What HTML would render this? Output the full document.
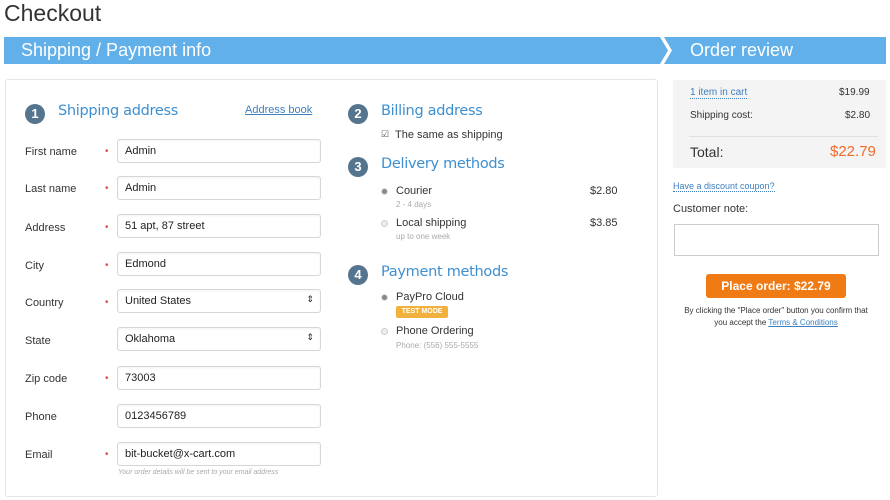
<!DOCTYPE html>
<html><head><meta charset="utf-8"><style>
*{margin:0;padding:0;box-sizing:border-box}
body{width:890px;height:500px;background:#fff;font-family:"Liberation Sans",sans-serif;position:relative;overflow:hidden;color:#333}
.a{position:absolute;white-space:nowrap}
.lbl{font-size:11px;color:#333}
.inp{position:absolute;left:117px;width:204px;height:24px;border:1px solid #d6d6d6;border-radius:3px;font-size:11px;padding:5px 7px;color:#222;box-shadow:inset 0 1px 2px rgba(0,0,0,.05)}
.star{position:absolute;left:105px;color:#e05050;font-size:10px}
.num{position:absolute;width:20px;height:20px;border-radius:50%;background:#55748e;color:#fff;font-weight:bold;font-size:13px;text-align:center;line-height:20px}
.h{position:absolute;font-size:14.5px;color:#3d8fd0;font-family:"DejaVu Sans",sans-serif;letter-spacing:-0.3px}
.rad{position:absolute;width:7px;height:7px;border-radius:50%;border:1px solid #ccc;background:#eee}
.sm{font-size:8px;color:#aaa}
</style></head><body>
<div class="a" style="left:4px;top:0;font-size:23px;color:#333">Checkout</div>
<svg class="a" style="left:0;top:0" width="890" height="70">
<polygon points="4,37 660,37 668,50.5 660,64 4,64" fill="#62b0ea"/>
<polygon points="664,37 886,37 886,64 664,64 672,50.5" fill="#62b0ea"/>
</svg>
<div class="a" style="left:21px;top:40px;font-size:18px;color:#fff">Shipping / Payment info</div>
<div class="a" style="left:690px;top:40px;font-size:18px;color:#fff">Order review</div>
<div class="a" style="left:5px;top:79px;width:653px;height:418px;border:1px solid #e6e6e6;border-radius:3px"></div>

<div class="num" style="left:25px;top:104px">1</div>
<div class="h" style="left:58px;top:103px">Shipping address</div>
<div class="a" style="left:245px;top:104px;font-size:11px;color:#3d7fc0;text-decoration:underline">Address book</div>

<div class="a lbl" style="left:25px;top:146px">First name</div><div class="star" style="top:146px">•</div><div class="inp" style="top:139px">Admin</div>
<div class="a lbl" style="left:25px;top:183px">Last name</div><div class="star" style="top:183px">•</div><div class="inp" style="top:176px">Admin</div>
<div class="a lbl" style="left:25px;top:222px">Address</div><div class="star" style="top:222px">•</div><div class="inp" style="top:214px">51 apt, 87 street</div>
<div class="a lbl" style="left:25px;top:260px">City</div><div class="star" style="top:260px">•</div><div class="inp" style="top:252px">Edmond</div>
<div class="a lbl" style="left:25px;top:297px">Country</div><div class="star" style="top:297px">•</div><div class="inp" style="top:289px">United States<span style="position:absolute;right:6px;top:4px;font-size:9px">⇕</span></div>
<div class="a lbl" style="left:25px;top:335px">State</div><div class="inp" style="top:327px">Oklahoma<span style="position:absolute;right:6px;top:4px;font-size:9px">⇕</span></div>
<div class="a lbl" style="left:25px;top:373px">Zip code</div><div class="star" style="top:373px">•</div><div class="inp" style="top:366px">73003</div>
<div class="a lbl" style="left:25px;top:411px">Phone</div><div class="inp" style="top:404px">0123456789</div>
<div class="a lbl" style="left:25px;top:449px">Email</div><div class="star" style="top:449px">•</div><div class="inp" style="top:442px">bit-bucket@x-cart.com</div>
<div class="a" style="left:118px;top:469px;font-size:7px;color:#aaa;font-style:italic">Your order details will be sent to your email address</div>

<div class="num" style="left:348px;top:104px">2</div>
<div class="h" style="left:381px;top:103px">Billing address</div>
<div class="a" style="left:381px;top:129px;font-size:9px;color:#555">☑</div>
<div class="a lbl" style="left:395px;top:129px">The same as shipping</div>
<div class="num" style="left:348px;top:157px">3</div>
<div class="h" style="left:381px;top:156px">Delivery methods</div>
<div class="rad" style="left:381px;top:188px;background:#888;border-color:#ddd"></div>
<div class="a lbl" style="left:396px;top:185px">Courier</div><div class="a lbl" style="left:590px;top:185px">$2.80</div>
<div class="a sm" style="left:396px;top:200px">2 - 4 days</div>
<div class="rad" style="left:381px;top:220px"></div>
<div class="a lbl" style="left:396px;top:217px">Local shipping</div><div class="a lbl" style="left:590px;top:217px">$3.85</div>
<div class="a sm" style="left:396px;top:232px">up to one week</div>
<div class="num" style="left:348px;top:265px">4</div>
<div class="h" style="left:381px;top:264px">Payment methods</div>
<div class="rad" style="left:381px;top:294px;background:#888;border-color:#ddd"></div>
<div class="a lbl" style="left:396px;top:291px">PayPro Cloud</div>
<div class="a" style="left:396px;top:306px;width:52px;height:12px;background:#f2b13d;border-radius:2px;color:#fff;font-size:7px;font-weight:bold;text-align:center;line-height:12px">TEST MODE</div>
<div class="rad" style="left:381px;top:328px"></div>
<div class="a lbl" style="left:396px;top:325px">Phone Ordering</div>
<div class="a sm" style="left:396px;top:341px">Phone: (556) 555-5555</div>

<div class="a" style="left:673px;top:80px;width:213px;height:88px;background:#f4f4f4"></div>
<div class="a" style="left:690px;top:87px;font-size:10px;color:#3d7fc0;border-bottom:1px dotted #3d7fc0">1 item in cart</div>
<div class="a" style="left:839px;top:87px;font-size:10px;color:#333">$19.99</div>
<div class="a" style="left:690px;top:110px;font-size:10px">Shipping cost:</div>
<div class="a" style="left:845px;top:110px;font-size:10px">$2.80</div>
<div class="a" style="left:689px;top:136px;width:189px;border-top:1px solid #e0e0e0"></div>
<div class="a" style="left:690px;top:144px;font-size:14px">Total:</div>
<div class="a" style="left:830px;top:143px;font-size:15px;color:#f26a2a">$22.79</div>
<div class="a" style="left:673px;top:181px;font-size:9px;color:#3d7fc0;border-bottom:1px dotted #3d7fc0">Have a discount coupon?</div>
<div class="a" style="left:673px;top:203px;font-size:11px">Customer note:</div>
<div class="a" style="left:674px;top:224px;width:205px;height:32px;border:1px solid #ccc"></div>
<div class="a" style="left:706px;top:274px;width:140px;height:24px;background:#f07a14;border-radius:3px;color:#fff;font-size:12px;font-weight:bold;text-align:center;line-height:24px">Place order: $22.79</div>
<div class="a" style="left:678px;top:305px;width:196px;text-align:center;font-size:8px;line-height:12px;color:#333;white-space:normal">By clicking the "Place order" button you confirm that you accept the <span style="color:#3d7fc0;text-decoration:underline">Terms &amp; Conditions</span></div>
</body></html>
